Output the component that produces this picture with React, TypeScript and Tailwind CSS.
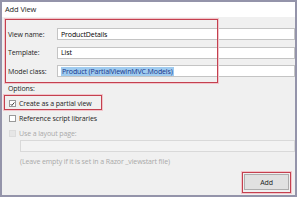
import React from 'react';

const font = { fontFamily: '"Segoe UI", "Open Sans", "Noto Sans", sans-serif' };

const Field: React.FC<{ label: string; children: React.ReactNode }> = ({ label, children }) => (
  <div className="flex h-[12px] items-center">
    <span className="w-[49px] shrink-0 text-[#1e1e1e]">{label}</span>
    <div className="flex h-full flex-1 items-center border border-[#c4c4c4] bg-white pl-[3px]">{children}</div>
  </div>
);

const Check: React.FC<{ checked?: boolean; disabled?: boolean; label: string }> = ({ checked, disabled, label }) => (
  <div className="flex h-[10px] items-center gap-[3px]">
    <span
      className={
        disabled
          ? 'flex h-[7px] w-[7px] items-center justify-center border border-[#dcdcdc] bg-[#e6e6e6]'
          : 'flex h-[7px] w-[7px] items-center justify-center border border-[#999999] bg-white'
      }
    >
      {checked && (
        <svg viewBox="0 0 8 8" className="h-[6px] w-[6px]">
          <path d="M1 4.2 L3 6.3 L7 1.5" fill="none" stroke="#222" strokeWidth="1.4" />
        </svg>
      )}
    </span>
    <span className={disabled ? 'text-[#a9a9a9]' : 'text-[#1e1e1e]'}>{label}</span>
  </div>
);

const App: React.FC = () => {
  return (
    <div
      className="relative h-[200px] w-[300px] overflow-hidden bg-white text-[7px] leading-[9px] tracking-[-0.12px]"
      style={font}
    >
      <div className="flex h-[197px] w-[297px] flex-col border-2 border-[#9494aa] bg-[#f0f0f0]">
        <div className="flex h-[15px] shrink-0 items-center bg-white pl-[3px] text-[7.5px] text-[#1e1e1e]">Add View</div>

        <div className="flex flex-1 flex-col pt-[11px]">
          <div className="flex flex-col gap-[6.5px] pl-[6px]">
            <Field label="View name:">
              <span>ProductDetails</span>
            </Field>
            <Field label="Template:">
              <span>List</span>
            </Field>
            <Field label="Model class:">
              <span className="bg-[#9fcbef] px-px text-[#17358a]">Product (PartialViewInMVC.Models)</span>
            </Field>
          </div>

          <div className="mt-[6.5px] pl-[6px] text-[#1e1e1e]">Options:</div>

          <div className="mt-[6px] flex flex-col gap-[5px] pl-[7px]">
            <Check checked label="Create as a partial view" />
            <Check label="Reference script libraries" />
            <Check disabled label="Use a layout page:" />
          </div>

          <div className="ml-[18px] mt-[1.5px] h-[12px] border border-[#d9d9d9] bg-[#f3f3f3]" />
          <div className="ml-[18px] mt-[4.5px] text-[#a9a9a9]">(Leave empty if it is set in a Razor _viewstart file)</div>

          <div className="mt-[8.5px] flex justify-end pr-[6px]">
            <button className="flex h-[16px] w-[45px] items-center justify-center border border-[#adadad] bg-[#e1e1e1] text-[#1e1e1e]">
              Add
            </button>
          </div>
        </div>
      </div>

      <div className="absolute left-[5px] top-[19px] h-[64px] w-[213px] border border-[#c4404f] shadow-[0_0_0_1px_#f2c4ca]" />
      <div className="absolute left-[4px] top-[95px] h-[15px] w-[98px] border border-[#c4404f] shadow-[0_0_0_1px_#f2c4ca]" />
      <div className="absolute left-[242px] top-[172px] h-[21px] w-[49px] border border-[#c4404f] shadow-[0_0_0_1px_#f2c4ca]" />
    </div>
  );
};

export default App;
